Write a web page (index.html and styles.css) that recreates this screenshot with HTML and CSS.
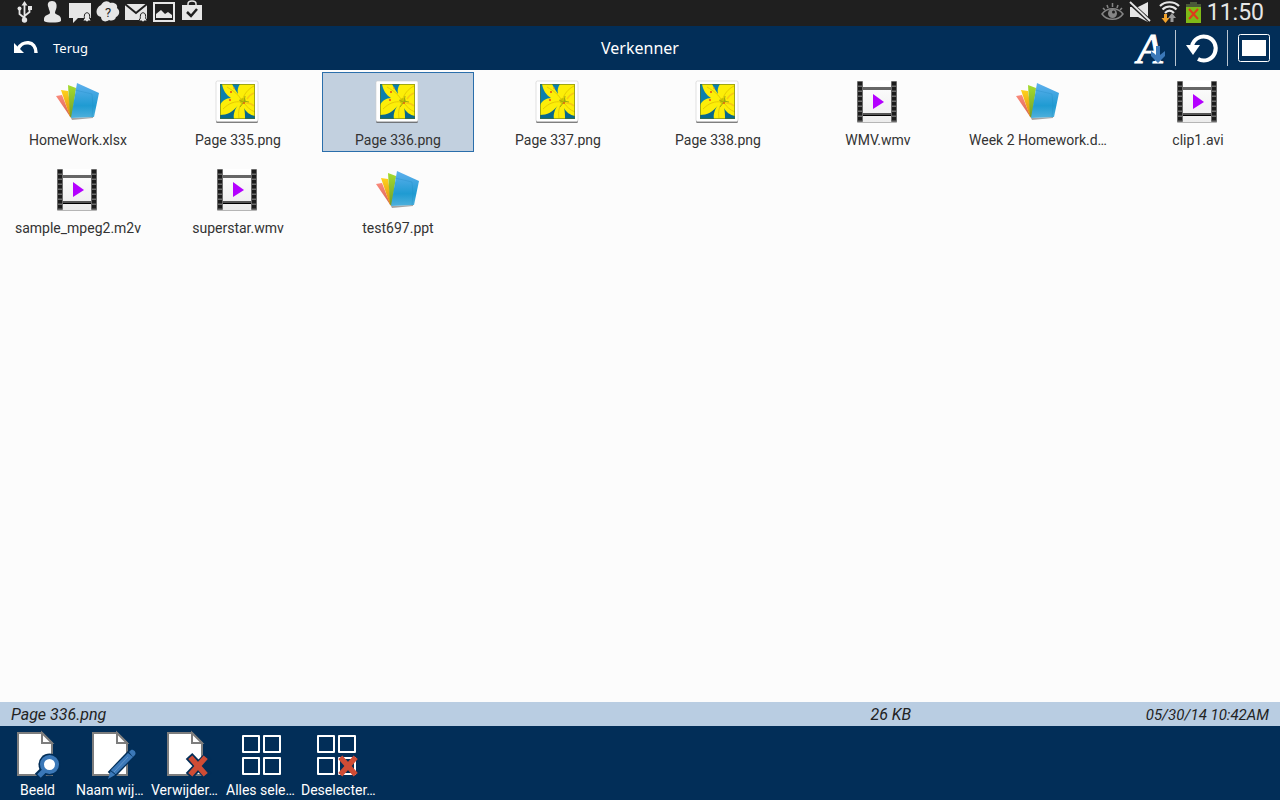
FILE: index.html
```html
<!DOCTYPE html>
<html lang="nl">
<head>
    <meta charset="UTF-8">
    <meta name="viewport" content="width=device-width, initial-scale=1.0">
    <title>Verkenner</title>
    <link rel="stylesheet" href="styles.css">
</head>
<body>
    <!-- shared icons -->
    <svg class="defs" width="0" height="0" aria-hidden="true">
        <defs>
            <linearGradient id="blueSheet" x1="0" y1="0" x2="0" y2="1">
                <stop offset="0" stop-color="#5fb0ee"/>
                <stop offset="0.65" stop-color="#1f9bd2"/>
                <stop offset="1" stop-color="#4fb0dc"/>
            </linearGradient>
            <linearGradient id="greenSheet" x1="0" y1="0" x2="0" y2="1">
                <stop offset="0" stop-color="#a5dc2e"/>
                <stop offset="1" stop-color="#6f9c2a"/>
            </linearGradient>
            <linearGradient id="yellowSheet" x1="0" y1="0" x2="0" y2="1">
                <stop offset="0" stop-color="#ffd21c"/>
                <stop offset="1" stop-color="#dc8a12"/>
            </linearGradient>
            <linearGradient id="redSheet" x1="0" y1="0" x2="0" y2="1">
                <stop offset="0" stop-color="#fb8a7c"/>
                <stop offset="1" stop-color="#d4604c"/>
            </linearGradient>
            <linearGradient id="filmBg" x1="0" y1="0" x2="0" y2="1">
                <stop offset="0" stop-color="#ffffff"/>
                <stop offset="1" stop-color="#ececec"/>
            </linearGradient>
        </defs>
        <symbol id="office" viewBox="0 0 48 48">
            <path d="M3 18l6-1 9 23z" fill="url(#redSheet)"/>
            <path d="M8 12l7 1 4 27-2-1z" fill="url(#yellowSheet)"/>
            <path d="M15 7l8 3-4 30-2-2z" fill="url(#greenSheet)"/>
            <path d="M18 40l22-1v1l-21 2z" fill="#000" opacity=".35"/>
            <path d="M24 5l22 10-5 24-23 1z" fill="url(#blueSheet)"/>
            <path d="M22 12l17 4 1 12-1 11" fill="none" stroke="#1b86bd" stroke-width=".7" opacity=".4"/>
        </symbol>
        <symbol id="photo" viewBox="0 0 48 48">
            <rect x="3" y="4" width="42" height="41" rx="1.5" fill="#555" opacity=".75"/>
            <rect x="3" y="3" width="42" height="40.5" rx="1.5" fill="#fff" stroke="#ccc" stroke-width=".6"/>
            <svg x="7" y="6" width="35" height="35" viewBox="0 0 35 35">
                <rect width="35" height="35" fill="#fcee08"/>
                <path d="M0 0h2c1 6 4 11 9 14-5 0-9 3-11 7z" fill="#0a7fae"/>
                <path d="M12 0h8c-2 3-3 6-2 10-2-3-4-6-6-10z" fill="#0a7fae"/>
                <path d="M0 31c7 0 13-3 18-10-3 4-5 9-4 14H0z" fill="#07688f"/>
                <path d="M25 35c0-4 0-7-1-11 2 4 6 7 11 8v3z" fill="#07688f"/>
                <path d="M22 17c-3-6-8-10-15-14M22 17c2-7 6-12 12-15M21 18c-6-1-12 1-18 7M22 19c-3 4-4 9-3 15M24 19c3 4 6 7 11 9" fill="none" stroke="#e6cc00" stroke-width="1"/>
                <path d="M27 15c2-3 4-5 7-6M26 19c4 0 6 1 8 3" fill="none" stroke="#f8b818" stroke-width="1.5" opacity=".7"/>
                <circle cx="23" cy="17" r="3" fill="#b4b400" opacity=".6"/>
                <path d="M25 19l-6-3M24 18l-4 5M24 17l5 1M24 18l1-6" stroke="#8a9a14" stroke-width=".8"/>
                <circle cx="11" cy="8" r="1" fill="#e84c10"/>
                <circle cx="14" cy="4" r=".8" fill="#f08010"/>
                <circle cx="10" cy="16" r="1" fill="#e84c10"/>
                <circle cx="24" cy="19" r="1" fill="#f06410"/>
                <rect x=".5" y=".5" width="34" height="34" fill="none" stroke="#56701c" opacity=".55"/>
            </svg>
        </symbol>
        <symbol id="film" viewBox="0 0 48 48">
            <rect x="4" y="4" width="40" height="41" rx="1" fill="#b5b5b5"/>
            <rect x="9" y="3" width="30" height="41" fill="url(#filmBg)"/>
            <path d="M9 9h30v3H9z" fill="#666"/>
            <path d="M9 35h30v2H9z" fill="#555"/>
            <path d="M9 37h30v1H9z" fill="#000"/>
            <rect x="4" y="3" width="6" height="41" rx="1" fill="#6b6b6b"/>
            <rect x="38" y="3" width="6" height="41" rx="1" fill="#6b6b6b"/>
            <path d="M7 4v39M41 4v39" stroke="#1c1c1c" stroke-width="4" stroke-dasharray="3.5 1.5"/>
            <path d="M20 16l11 8-11 7z" fill="#b400ff"/>
        </symbol>
        <symbol id="sheet" viewBox="0 0 48 48">
            <path d="M3 3h24l10 10v32H3z" fill="#fff" stroke="#7d7d7d" stroke-width="2"/>
            <path d="M27 3v10h10z" fill="#fff" stroke="#7d7d7d" stroke-width="2"/>
        </symbol>
        <symbol id="cross" viewBox="0 0 20 20">
            <path d="M3 2l14 16M17 2L3 18" stroke="#cf4c35" stroke-width="5" fill="none"/>
        </symbol>
        <symbol id="bell" viewBox="0 0 8 10">
            <path d="M0 8c2-1 1-3 1.5-5C2 0 6 0 6.500 3 7 5 6 7 8 8v1H5v1H3V9H0z" fill="#e6e6e6" stroke="#1f1f1f" stroke-width="1"/>
        </symbol>
    </svg>

    <div class="statusbar">
        <div class="status-icons">
            <svg width="28" height="26" viewBox="0 0 28 26">
                <path d="M13.500 4v17M13.500 18l-5-4V9M13.500 16l5-4V8" fill="none" stroke="#e6e6e6" stroke-width="1.8"/>
                <path d="M13.500 1l3 4.500h-6zM17 6h4v4h-4z" fill="#e6e6e6"/>
                <circle cx="8.5" cy="8.5" r="2" fill="#e6e6e6"/>
                <circle cx="13.5" cy="20" r="2.7" fill="#e6e6e6"/>
            </svg>
            <svg width="28" height="26" viewBox="0 0 28 26">
                <path d="M13 1c4 0 5 3 4.500 6.500C17 10 16 11 16 13c1 2 6 2 6 6v2c-2 2-15 2-17 0v-2c0-4 5-4 6-6 0-2-1-3-1.500-5.500C8 4 9 1 13 1z" fill="#e6e6e6"/>
            </svg>
            <svg width="28" height="26" viewBox="0 0 28 26">
                <path d="M2 3h22v15H11l-5 5v-5H2z" fill="#e6e6e6"/>
                <use href="#bell" x="16" y="12" width="8" height="10"/>
            </svg>
            <svg width="28" height="26" viewBox="0 0 28 26">
                <path d="M6 5c3-5 8-4 9-2 5-1 8 2 7 5 4 3 2 8-1 9-1 4-5 4-7 3-4 3-8 1-8-3-6-1-6-9 0-12z" fill="#e6e6e6"/>
                <text x="13" y="17" class="cloud-mark">?</text>
            </svg>
            <svg width="28" height="26" viewBox="0 0 28 26">
                <path d="M2 4h22v16H2z" fill="#e6e6e6"/>
                <path d="M2 4l11 9 11-9" fill="none" stroke="#1f1f1f" stroke-width="2"/>
                <use href="#bell" x="16" y="12" width="8" height="10"/>
            </svg>
            <svg width="28" height="26" viewBox="0 0 28 26">
                <path d="M3 3h20v18H3z" fill="none" stroke="#e6e6e6" stroke-width="2"/>
                <path d="M5 18v-4l5-4 4 4 3-2 4 3v3z" fill="#e6e6e6"/>
            </svg>
            <svg width="28" height="26" viewBox="0 0 28 26">
                <path d="M3 5h20v15H3z" fill="#e6e6e6"/>
                <path d="M9 6V4c0-4 8-4 8 0v2" fill="none" stroke="#e6e6e6" stroke-width="1.5"/>
                <path d="M8 12l4 4 6-7" fill="none" stroke="#1f1f1f" stroke-width="2.5"/>
            </svg>
        </div>
        <div class="status-icons">
            <svg width="28" height="26" viewBox="0 0 28 26">
                <path d="M3 14c5-7 16-7 21 0-5 7-16 7-21 0z" fill="none" stroke="#858585" stroke-width="1.5"/>
                <circle cx="13.5" cy="13.5" r="4.5" fill="#858585"/>
                <circle cx="14.5" cy="12" r="1.5" fill="#1f1f1f"/>
                <path d="M4 8l2 2M8 5l1 3M13.500 3v4M19 5l-1 3M23 8l-2 2" stroke="#858585" stroke-width="1.5"/>
            </svg>
            <svg width="28" height="26" viewBox="0 0 28 26">
                <path d="M3 7h8l10-5v20L11 17H3z" fill="#e6e6e6"/>
                <path d="M1 1l23 21" stroke="#1f1f1f" stroke-width="4"/>
                <path d="M3 2l20 19" stroke="#e6e6e6" stroke-width="1.8"/>
            </svg>
            <svg width="28" height="26" viewBox="0 0 28 26">
                <path d="M5 6c5-5 14-5 19 0M7.500 9.500c4-4 10-4 14 0M10 13c3-3 6-3 9 0" fill="none" stroke="#e6e6e6" stroke-width="2.2"/>
                <path d="M9 14h3v4h2.500l-4 5-4-5H9z" fill="#f2a32c"/>
                <path d="M15.500 22v-4H13l4-5 4 5h-2.500v4z" fill="#9a9a9a"/>
            </svg>
            <svg width="24" height="26" viewBox="0 0 24 26">
                <path d="M7 2h7v2h4v19H3V4h4z" fill="#7fba17"/>
                <path d="M7 2h7v2h4v3H3V4h4z" fill="#4a5a38"/>
                <path d="M6 9l9 10M15 9L6 19" stroke="#e03a1c" stroke-width="2"/>
            </svg>
            <span class="clock">11:50</span>
        </div>
    </div>

    <header class="header">
        <button class="back" type="button">
            <svg width="26" height="20" viewBox="0 0 26 20">
                <path d="M5 11C9 2 23 2 23 15" fill="none" stroke="#fff" stroke-width="3.5"/>
                <path d="M1 5v10h10z" fill="#fff"/>
            </svg>
            Terug
        </button>
        <h1>Verkenner</h1>
        <div class="actions">
            <button type="button" aria-label="Sorteren">
                <svg width="52" height="44" viewBox="0 0 52 44">
                    <text x="14" y="37" class="sort-letter">A</text>
                    <path d="M33 20h4v9l5-4v5l-7 7-7-7v-5l5 4z" fill="#3b78b8"/>
                </svg>
            </button>
            <button type="button" aria-label="Vernieuwen">
                <svg width="51" height="44" viewBox="0 0 51 44">
                    <path d="M16 20A12 12 0 1 1 22 33" fill="none" stroke="#fff" stroke-width="4"/>
                    <path d="M10 19h14l-7 10z" fill="#fff"/>
                </svg>
            </button>
            <button type="button" aria-label="Weergave">
                <svg width="52" height="44" viewBox="0 0 52 44">
                    <rect x="10.5" y="8.5" width="31" height="27" rx="2" fill="none" stroke="#fff"/>
                    <path d="M14 14h24v16H14z" fill="#fff"/>
                </svg>
            </button>
        </div>
    </header>

    <main class="files">
        <button class="file" type="button"><svg><use href="#office"/></svg><span>HomeWork.xlsx</span></button>
        <button class="file" type="button"><svg><use href="#photo"/></svg><span>Page 335.png</span></button>
        <button class="file selected" type="button"><svg><use href="#photo"/></svg><span>Page 336.png</span></button>
        <button class="file" type="button"><svg><use href="#photo"/></svg><span>Page 337.png</span></button>
        <button class="file" type="button"><svg><use href="#photo"/></svg><span>Page 338.png</span></button>
        <button class="file" type="button"><svg><use href="#film"/></svg><span>WMV.wmv</span></button>
        <button class="file" type="button"><svg><use href="#office"/></svg><span>Week 2 Homework.d…</span></button>
        <button class="file" type="button"><svg><use href="#film"/></svg><span>clip1.avi</span></button>
        <button class="file" type="button"><svg><use href="#film"/></svg><span>sample_mpeg2.m2v</span></button>
        <button class="file" type="button"><svg><use href="#film"/></svg><span>superstar.wmv</span></button>
        <button class="file" type="button"><svg><use href="#office"/></svg><span>test697.ppt</span></button>
    </main>

    <div class="info">
        <span>Page 336.png</span>
        <span class="info-size">26 KB</span>
        <span class="info-date">05/30/14 10:42AM</span>
    </div>

    <footer class="toolbar">
        <button type="button">
            <svg width="48" height="50" viewBox="0 0 48 50">
                <use href="#sheet" width="48" height="48"/>
                <path d="M23 47l8-8" stroke="#022e58" stroke-width="9"/>
                <circle cx="34.5" cy="34.5" r="11" fill="#022e58"/>
                <path d="M24 46l8-8" stroke="#3b78b8" stroke-width="5"/>
                <circle cx="34.5" cy="34.5" r="7.5" fill="#fff" stroke="#3b78b8" stroke-width="4"/>
            </svg>
            <span>Beeld</span>
        </button>
        <button type="button">
            <svg width="48" height="50" viewBox="0 0 48 50">
                <use href="#sheet" width="48" height="48"/>
                <path d="M21 45L43 22" stroke="#022e58" stroke-width="9"/>
                <path d="M18 49l3-9 17-17 5 4-18 18z" fill="#3b78b8"/>
                <path d="M39 22l2-2c2-1 6 2 4 5l-2 2z" fill="#3b78b8"/>
                <path d="M24 42l14-15" stroke="#6495c8" stroke-width="1"/>
                <path d="M20 40l6 5" stroke="#022e58" stroke-width="1"/>
            </svg>
            <span class="long">Naam wij…</span>
        </button>
        <button type="button">
            <svg width="48" height="50" viewBox="0 0 48 50">
                <use href="#sheet" width="48" height="48"/>
                <path d="M24 26l19 20M43 26L24 46" stroke="#022e58" stroke-width="9"/>
                <use href="#cross" x="22" y="25" width="22" height="22"/>
            </svg>
            <span class="long">Verwijder…</span>
        </button>
        <button type="button">
            <svg width="48" height="50" viewBox="0 0 48 50">
                <path d="M3 6h16v16H3zM24 6h16v16H24zM3 28h16v16H3zM24 28h16v16H24z" fill="none" stroke="#fff" stroke-width="2" stroke-linejoin="round"/>
            </svg>
            <span class="long">Alles sele…</span>
        </button>
        <button type="button">
            <svg width="48" height="50" viewBox="0 0 48 50">
                <path d="M3 6h16v16H3zM24 6h16v16H24zM3 28h16v16H3zM24 28h16v16H24z" fill="none" stroke="#fff" stroke-width="2" stroke-linejoin="round"/>
                <use href="#cross" x="22" y="25" width="22" height="22"/>
            </svg>
            <span class="long">Deselecter…</span>
        </button>
    </footer>
</body>
</html>
```

FILE: styles.css
```css
* {
    box-sizing: border-box;
}
body {
    font-family: Roboto, sans-serif;
    background-color: #fcfcfc;
    color: #333;
    display: flex;
    flex-direction: column;
    min-height: 100vh;
    margin: 0;
}
button {
    font: inherit;
    color: inherit;
    background: none;
    border: 0;
    padding: 0;
    cursor: pointer;
}
svg {
    display: block;
}
.defs {
    position: absolute;
}
.statusbar {
    display: flex;
    justify-content: space-between;
    height: 26px;
    background: #1f1f1f;
    padding: 0 16px 0 11px;
}
.status-icons {
    display: flex;
    align-items: center;
}
.clock {
    font-size: 23px;
    line-height: 26px;
    color: #e6e6e6;
}
.cloud-mark {
    font-size: 13px;
    text-anchor: middle;
    fill: #1f1f1f;
}
.header {
    display: grid;
    grid-template-columns: 1fr auto 1fr;
    align-items: center;
    height: 44px;
    background: #022e58;
    color: #fff;
    font-family: "Noto Sans", sans-serif;
}
.header h1 {
    margin: 0;
    font-size: 16px;
    font-weight: normal;
}
.back {
    display: flex;
    align-items: center;
    justify-self: start;
    gap: 14px;
    padding-left: 13px;
    height: 44px;
    font-size: 13px;
}
.actions {
    display: flex;
    justify-content: flex-end;
    align-items: center;
}
.actions button {
    height: 36px;
    display: flex;
    align-items: center;
}
.actions button + button {
    border-left: 1px solid #b9c5d1;
}
.sort-letter {
    font-family: "Liberation Serif", serif;
    font-style: italic;
    font-size: 42px;
    fill: #fff;
    stroke: #fff;
    stroke-width: 1px;
}
.files {
    flex: 1;
    display: grid;
    grid-template-columns: repeat(auto-fill, 152px);
    align-content: start;
    gap: 8px;
    padding: 2px;
}
.file {
    display: flex;
    flex-direction: column;
    align-items: center;
    height: 80px;
    padding-top: 5px;
    border: 1px solid transparent;
    font-size: 14px;
    line-height: 20px;
}
.file svg {
    width: 48px;
    height: 48px;
    margin: 0 2px 4px 0;
}
.selected {
    background: #c2d0df;
    border-color: #2a6eab;
}
.info {
    display: grid;
    grid-template-columns: 68% 1fr auto;
    height: 24px;
    padding: 0 11px;
    background: #b9cde2;
    color: #222;
    font-size: 16px;
    font-style: italic;
    line-height: 26px;
}
.info-size {
    padding-left: 4px;
}
.info-date {
    font-size: 15px;
}
.toolbar {
    display: flex;
    height: 74px;
    background: #022e58;
    color: #fff;
    font-size: 14px;
}
.toolbar button {
    display: flex;
    flex-direction: column;
    align-items: center;
    width: 75px;
    padding-top: 4px;
    line-height: 20px;
    white-space: nowrap;
}
.toolbar svg {
    margin-left: 3px;
}
.toolbar .long {
    align-self: flex-start;
    padding-left: 1px;
}
```
